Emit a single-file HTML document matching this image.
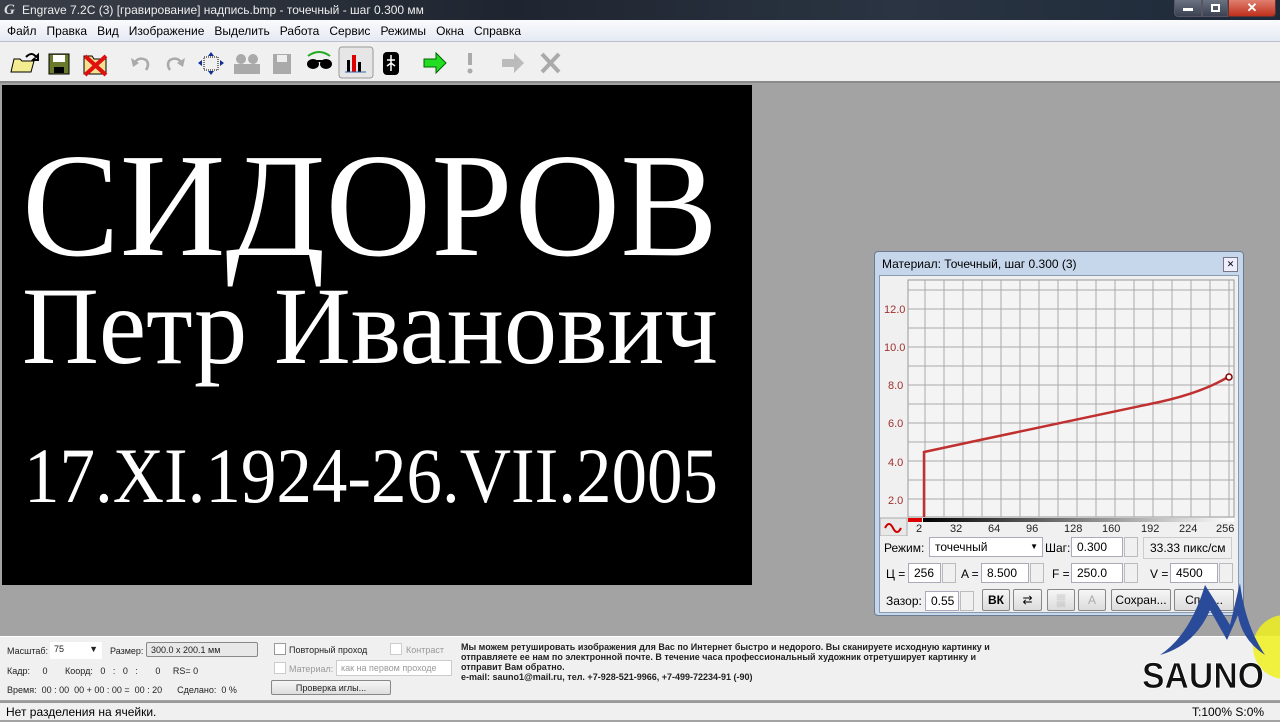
<!DOCTYPE html>
<html><head><meta charset="utf-8"><style>
*{margin:0;padding:0;box-sizing:border-box}
body{width:1280px;height:720px;overflow:hidden;background:#a3a3a3;font-family:"Liberation Sans",sans-serif;position:relative}
.abs{position:absolute}
#title{left:0;top:0;width:1280px;height:20px;background:linear-gradient(90deg,#3a3f48 0%,#1f2530 40%,#2a3442 70%,#1e2a3a 100%);color:#eee;font-size:12px;line-height:20px;padding-left:22px}
#menu{left:0;top:20px;width:1280px;height:22px;background:linear-gradient(#fafbfd,#e4e9f3);font-size:12px;line-height:22px;border-bottom:1px solid #b9c0cc}
#menu span{margin:0 0 0 7px;margin-right:3px}
#tb{left:0;top:42px;width:1280px;height:41px;background:#f0f0f0;border-bottom:2px solid #8a8a8a}
#canvas{left:2px;top:85px;width:750px;height:500px;background:#000}
#bottom{left:0;top:636px;width:1280px;height:64px;background:#f0f0f0;border-top:1px solid #fff;font-size:9px;color:#222}
#status{left:0;top:701px;width:1280px;height:19px;background:#f0f0f0;border-top:2px solid #999;font-size:12px;line-height:19px;padding-left:6px}
.dlg{left:874px;top:251px;width:370px;height:365px;background:#c6d7eb;border:1px solid #6b7b90;border-radius:4px}
.in{background:#fff;border:1px solid #aab;font-size:12px;line-height:18px;padding-left:5px;position:absolute;height:20px}
.btn{position:absolute;background:linear-gradient(#f6f6f6,#dcdcdc);border:1px solid #888;border-radius:2px;font-size:12px;text-align:center;line-height:20px;height:22px}
.sp{position:absolute;width:14px;height:20px;border:1px solid #bbb;background:#f0f0f0}
.lbl{position:absolute;font-size:12px}
</style></head><body>
<div id="title" class="abs"><b style="position:absolute;left:4px;font-style:italic;font-family:'Liberation Serif';font-size:15px;color:#ddd">G</b>Engrave 7.2C (3) [гравирование] надпись.bmp - точечный - шаг 0.300 мм</div>
<div class="abs" style="left:1174px;top:0;width:28px;height:17px;border:1px solid #556;border-top:none;border-radius:0 0 0 4px;background:linear-gradient(#6a7280,#3b4150)"><div style="margin:8px auto 0;width:10px;height:3px;background:#fff"></div></div>
<div class="abs" style="left:1202px;top:0;width:26px;height:17px;border:1px solid #556;border-top:none;background:linear-gradient(#6a7280,#3b4150)"><div style="margin:4px auto 0;width:9px;height:8px;border:2px solid #fff"></div></div>
<div class="abs" style="left:1228px;top:0;width:48px;height:17px;border:1px solid #633;border-top:none;border-radius:0 0 4px 0;background:linear-gradient(#e08070,#c0301c);color:#fff;font-weight:bold;text-align:center;font-size:13px;line-height:15px">✕</div>
<div id="menu" class="abs"><span>Файл</span><span>Правка</span><span>Вид</span><span>Изображение</span><span>Выделить</span><span>Работа</span><span>Сервис</span><span>Режимы</span><span>Окна</span><span>Справка</span></div>
<div id="tb" class="abs">
<svg width="600" height="41" viewBox="0 0 600 41">
<path d="M11 30 L14 17 L20 17 L22 19 L34 19 L31 30Z" fill="#f4ec90" stroke="#000"/><path d="M26 15 q6-6 10 0 l2-2 0 5 -5 0 2-2" fill="none" stroke="#000" stroke-width="2"/>
<rect x="49" y="12" width="20" height="20" fill="#6a7a2a" stroke="#000"/><rect x="53" y="13" width="12" height="7" fill="#fff"/><rect x="54" y="25" width="10" height="6" fill="#000"/>
<path d="M84 14 h8 l2 3 h12 v15 h-22z" fill="#f4e090" stroke="#000"/><path d="M85 14 L106 33 M106 14 L85 33" stroke="#e01010" stroke-width="4"/>
<path d="M134 22 q4-8 12-4 q4 4 0 10" fill="none" stroke="#aaa" stroke-width="2.5"/><path d="M131 16 l2 9 6-4z" fill="#aaa"/>
<path d="M182 22 q-4-8-12-4 q-4 4 0 10" fill="none" stroke="#aaa" stroke-width="2.5"/><path d="M185 16 l-2 9 -6-4z" fill="#aaa"/>
<rect x="204" y="15" width="14" height="13" fill="none" stroke="#000" stroke-dasharray="1 1"/><path d="M211 10l-3 4h6z M211 33l-3-4h6z M198 21l4-3v6z M224 21l-4-3v6z" fill="#103090"/>
<g fill="#aaa"><circle cx="241" cy="17" r="5"/><rect x="234" y="22" width="14" height="10"/><circle cx="253" cy="17" r="5"/><rect x="246" y="22" width="14" height="10"/></g>
<rect x="273" y="12" width="18" height="20" fill="#aaa"/><rect x="277" y="13" width="10" height="7" fill="#eee"/>
<path d="M308 14 q11-8 22 0" fill="none" stroke="#2a2" stroke-width="2"/><ellipse cx="313" cy="22" rx="6" ry="5"/><ellipse cx="326" cy="22" rx="6" ry="5"/><rect x="312" y="18" width="14" height="2"/>
<rect x="339" y="5" width="34" height="31" rx="3" fill="#e6e6e6" stroke="#999"/><rect x="347" y="18" width="3" height="12" fill="#000"/><rect x="352" y="13" width="4" height="17" fill="#d00"/><rect x="358" y="20" width="3" height="10" fill="#000"/><line x1="345" y1="30" x2="366" y2="30" stroke="#36a"/>
<rect x="383" y="10" width="16" height="23" rx="4" fill="#000"/><path d="M391 13v16 M387 18h8 M387 24l4-3 4 3" stroke="#fff" stroke-width="1.5" fill="none"/>
<path d="M424 17h12v-6l10 10-10 10v-6h-12z" fill="#2d2" stroke="#060"/>
<path d="M470 11v12" stroke="#aaa" stroke-width="4"/><circle cx="470" cy="29" r="2.5" fill="#aaa"/>
<path d="M502 17h12v-6l10 10-10 10v-6h-12z" fill="#bbb"/>
<path d="M542 12l17 18M559 12l-17 18" stroke="#aaa" stroke-width="4"/>
</svg></div>
<div id="canvas" class="abs">
<svg width="750" height="500">
<g fill="#fff" font-family="Liberation Serif" >
<text x="20" y="170" font-size="148" textLength="696" lengthAdjust="spacingAndGlyphs">СИДОРОВ</text>
<text x="20" y="278" font-size="110" textLength="696" lengthAdjust="spacingAndGlyphs">Петр Иванович</text>
<text x="22" y="417" font-size="78" textLength="694" lengthAdjust="spacingAndGlyphs">17.XI.1924-26.VII.2005</text>
</g></svg></div>

<div class="abs dlg">
<div class="lbl" style="left:7px;top:5px">Материал: Точечный, шаг 0.300 (3)</div>
<div class="abs" style="left:348px;top:5px;width:15px;height:15px;border:1px solid #778;background:#eef;font-size:9px;text-align:center;line-height:13px">✕</div>
<div class="abs" style="left:4px;top:23px;width:360px;height:338px;background:#f0f0f0;border:1px solid #8a9ab0"></div>
</div>
<svg class="abs" style="left:880px;top:276px" width="358" height="260">
<rect x="0" y="0" width="358" height="260" fill="#f0f0f0"/>
<rect x="28" y="4" width="326" height="237" fill="#f4f4f4" stroke="#999"/>
<g stroke="#aaa" stroke-width="1">
<path d="M28 14H354M28 33H354M28 52H354M28 71H354M28 90H354M28 109H354M28 128H354M28 147H354M28 166H354M28 185H354M28 204H354M28 223H354"/>
<path d="M45 4V241M64 4V241M83 4V241M102 4V241M121 4V241M140 4V241M159 4V241M178 4V241M197 4V241M216 4V241M235 4V241M254 4V241M273 4V241M292 4V241M311 4V241M330 4V241M349 4V241"/>
</g>
<g fill="#a03030" font-size="11"><text x="4" y="37">12.0</text><text x="4" y="75">10.0</text><text x="8" y="113">8.0</text><text x="8" y="151">6.0</text><text x="8" y="190">4.0</text><text x="8" y="228">2.0</text></g>
<path d="M44 241V176L100 164Q200 143 270 128Q320 118 348 101" fill="none" stroke="#c03030" stroke-width="2.5"/>
<circle cx="349" cy="101" r="3" fill="#fff" stroke="#800" stroke-width="1.5"/>
<defs><linearGradient id="g"><stop offset="0" stop-color="#000"/><stop offset="1" stop-color="#fff"/></linearGradient></defs>
<rect x="28" y="242" width="14" height="4" fill="#d00"/><rect x="43" y="242" width="311" height="4" fill="url(#g)"/>
<rect x="0" y="242" width="27" height="18" fill="#e8e8e8" stroke="#aaa"/><path d="M5 252q4-8 8 0t8 0" stroke="#c00" stroke-width="2" fill="none"/>
<g font-size="11" fill="#222"><text x="36" y="256">2</text><text x="70" y="256">32</text><text x="108" y="256">64</text><text x="146" y="256">96</text><text x="184" y="256">128</text><text x="222" y="256">160</text><text x="261" y="256">192</text><text x="299" y="256">224</text><text x="336" y="256">256</text></g>
</svg>
<div class="lbl" style="left:884px;top:541px">Режим:</div>
<div class="in" style="left:929px;top:537px;width:114px">точечный<span style="position:absolute;right:4px;font-size:8px">▼</span></div>
<div class="lbl" style="left:1045px;top:541px">Шаг:</div>
<div class="in" style="left:1071px;top:537px;width:52px">0.300</div><div class="sp" style="left:1124px;top:537px"></div>
<div class="abs" style="left:1143px;top:537px;width:89px;height:22px;border:1px solid #ccc;font-size:12px;line-height:20px;padding-left:6px">33.33 пикс/см</div>
<div class="lbl" style="left:886px;top:567px">Ц =</div><div class="in" style="left:908px;top:563px;width:33px">256</div><div class="sp" style="left:942px;top:563px"></div>
<div class="lbl" style="left:961px;top:567px">A =</div><div class="in" style="left:981px;top:563px;width:48px">8.500</div><div class="sp" style="left:1030px;top:563px"></div>
<div class="lbl" style="left:1052px;top:567px">F =</div><div class="in" style="left:1071px;top:563px;width:52px">250.0</div><div class="sp" style="left:1124px;top:563px"></div>
<div class="lbl" style="left:1150px;top:567px">V =</div><div class="in" style="left:1170px;top:563px;width:48px">4500</div><div class="sp" style="left:1219px;top:563px"></div>
<div class="lbl" style="left:886px;top:594px">Зазор:</div><div class="in" style="left:925px;top:591px;width:34px">0.55</div><div class="sp" style="left:960px;top:591px"></div>
<div class="btn" style="left:982px;top:589px;width:28px;font-weight:bold">ВК</div>
<div class="btn" style="left:1013px;top:589px;width:29px">⇄</div>
<div class="btn" style="left:1047px;top:589px;width:28px;color:#aaa">▒</div>
<div class="btn" style="left:1078px;top:589px;width:28px;color:#aaa">A</div>
<div class="btn" style="left:1111px;top:589px;width:60px">Сохран...</div>
<div class="btn" style="left:1174px;top:589px;width:60px">Спис...</div>

<div id="bottom" class="abs">
<div class="abs" style="left:7px;top:9px">Масштаб:</div><div class="abs" style="left:50px;top:5px;width:52px;height:17px;background:#fff;padding:2px 4px">75<span style="float:right">▼</span></div>
<div class="abs" style="left:110px;top:9px">Размер:</div><div class="abs" style="left:146px;top:5px;width:112px;height:15px;border:1px solid #888;border-radius:2px;background:#e8e8e8;padding:2px 4px">300.0 x 200.1 мм</div>
<div class="abs" style="left:7px;top:29px">Кадр:&nbsp;&nbsp;&nbsp;&nbsp;&nbsp;0&nbsp;&nbsp;&nbsp;&nbsp;&nbsp;&nbsp;&nbsp;Коорд:&nbsp;&nbsp;&nbsp;0&nbsp;&nbsp;&nbsp;:&nbsp;&nbsp;&nbsp;0&nbsp;&nbsp;&nbsp;:&nbsp;&nbsp;&nbsp;&nbsp;&nbsp;&nbsp;&nbsp;0&nbsp;&nbsp;&nbsp;&nbsp;&nbsp;RS= 0</div>
<div class="abs" style="left:7px;top:48px">Время:&nbsp;&nbsp;00 : 00&nbsp;&nbsp;00 + 00 : 00 =&nbsp;&nbsp;00 : 20&nbsp;&nbsp;&nbsp;&nbsp;&nbsp;&nbsp;Сделано:&nbsp;&nbsp;0 %</div>
<div class="abs" style="left:274px;top:6px;width:12px;height:12px;border:1px solid #999;background:#fff"></div><div class="abs" style="left:289px;top:8px">Повторный проход</div>
<div class="abs" style="left:390px;top:6px;width:12px;height:12px;border:1px solid #ccc;background:#fff"></div><div class="abs" style="left:406px;top:8px;color:#999">Контраст</div>
<div class="abs" style="left:274px;top:25px;width:12px;height:12px;border:1px solid #ccc;background:#fff"></div><div class="abs" style="left:289px;top:27px;color:#999">Материал:</div>
<div class="abs" style="left:336px;top:23px;width:116px;height:16px;border:1px solid #ccc;background:#fff;color:#999;padding:2px 4px">как на первом проходе</div>
<div class="abs" style="left:271px;top:43px;width:120px;height:15px;border:1px solid #888;border-radius:2px;background:linear-gradient(#f6f6f6,#ddd);text-align:center;line-height:14px">Проверка иглы...</div>
<div class="abs" style="left:461px;top:5px;font-weight:bold;line-height:10px;white-space:nowrap">Мы можем ретушировать изображения для Вас по Интернет быстро и недорого. Вы сканируете исходную картинку и<br>отправляете ее нам по электронной почте. В течение часа профессиональный художник отретуширует картинку и<br>отправит Вам обратно.<br>e-mail: sauno1@mail.ru, тел. +7-928-521-9966, +7-499-72234-91 (-90)</div>
</div>
<div id="status" class="abs">Нет разделения на ячейки.<span style="position:absolute;left:1192px">T:100% S:0%</span></div>
<svg class="abs" style="left:1130px;top:575px" width="150" height="120">
<circle cx="155" cy="72" r="32" fill="#f0f020" opacity="0.85"/>
<path d="M30 80 Q60 60 75 10 L100 50 L110 8 Q115 50 135 80 Q112 65 108 40 L97 65 L80 35 Q65 70 30 80Z" fill="#2a4a9a"/>
<text x="12" y="113" font-size="36" font-weight="bold" fill="#111" stroke="#fff" stroke-width="0.8" font-family="Liberation Sans" textLength="122" lengthAdjust="spacingAndGlyphs">SAUNO</text>
</svg>
</body></html>
